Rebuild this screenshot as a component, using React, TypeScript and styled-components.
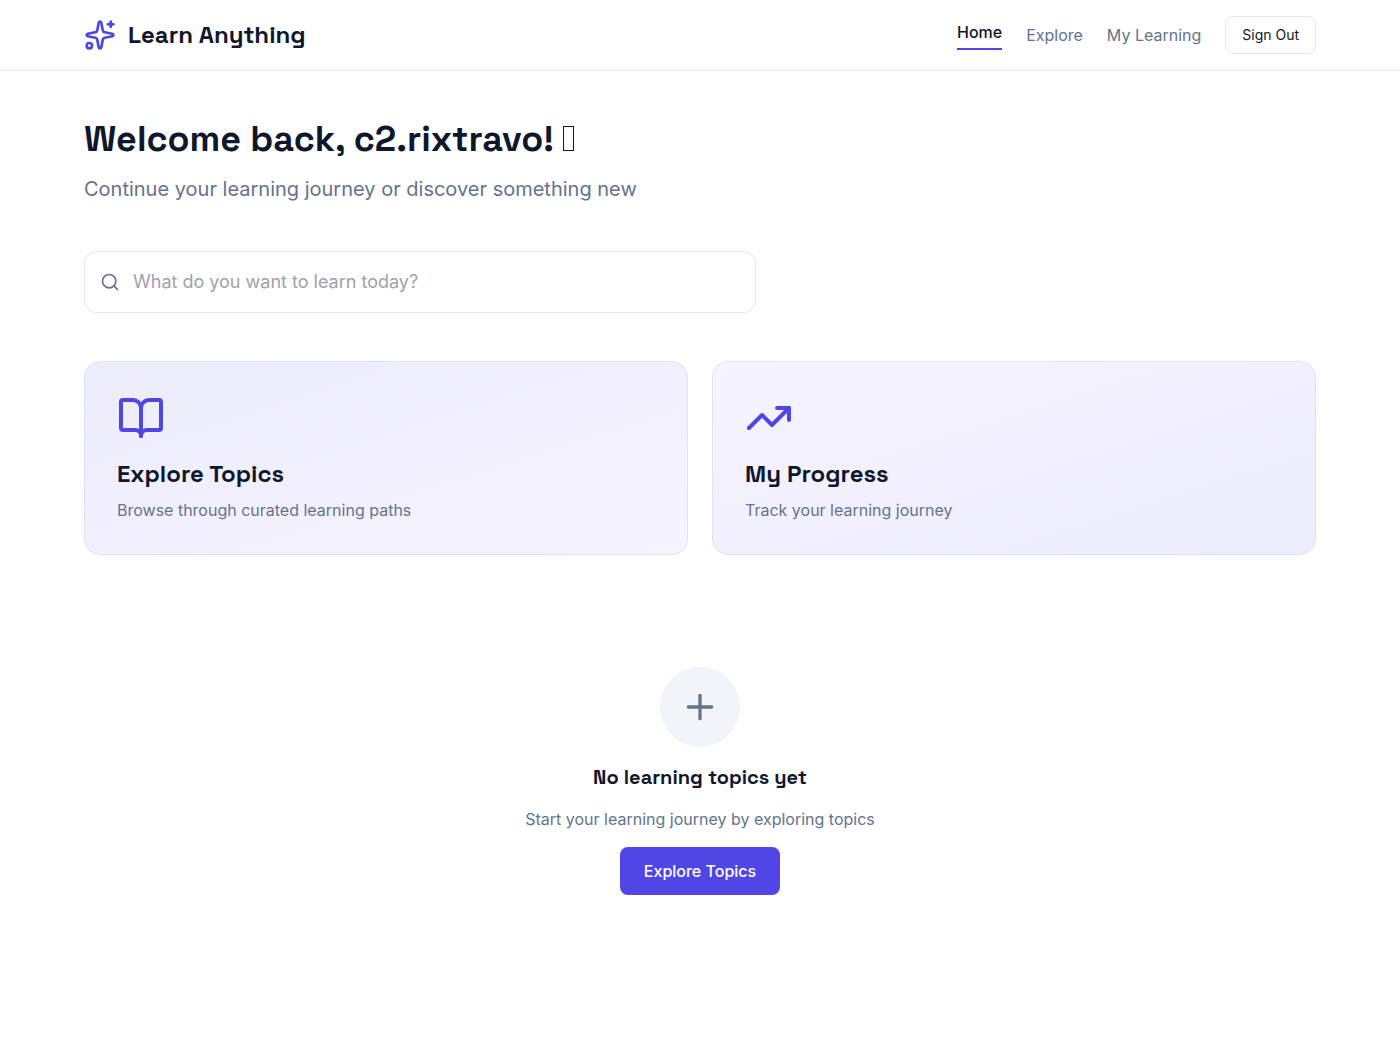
import React from "react";
import styled, { createGlobalStyle, css } from "styled-components";
import { Sparkles, Search, BookOpen, TrendingUp, Plus } from "lucide-react";

const display = css`
  font-family: "Space Grotesk", Inter, "Liberation Sans", sans-serif;
`;

const GlobalStyle = createGlobalStyle`
  *, *::before, *::after { box-sizing: border-box; }
  body {
    margin: 0;
    background: #fefefe;
    color: #0f172a;
    font-family: Inter, "Liberation Sans", sans-serif;
    font-size: 16px;
    line-height: 24px;
  }
  h1, h2, h3, p { margin: 0; }
  a { color: inherit; text-decoration: none; }
  button { font-family: inherit; cursor: pointer; }
`;

const Container = styled.div`
  width: 100%;
  max-width: 1400px;
  margin: 0 auto;
  padding: 0 84px;
`;

const Header = styled.header`
  background: #fefefe;
  border-bottom: 1px solid #e5e7eb;
`;

const HeaderRow = styled(Container)`
  display: flex;
  align-items: center;
  justify-content: space-between;
  padding-top: 16px;
  padding-bottom: 16px;
`;

const Brand = styled.a`
  ${display}
  display: flex;
  align-items: center;
  gap: 12px;
  font-size: 24px;
  line-height: 32px;
  font-weight: 700;
  svg { color: #4f46e5; }
`;

const Nav = styled.nav`
  display: flex;
  align-items: center;
  gap: 24px;
`;

const NavLink = styled.a<{ $active?: boolean }>`
  color: ${(p) => (p.$active ? "#0f172a" : "#64748b")};
  font-weight: ${(p) => (p.$active ? 500 : 400)};
  ${(p) => p.$active && css`
    padding-bottom: 4px;
    border-bottom: 2px solid #4f46e5;
  `}
`;

const OutlineButton = styled.button`
  height: 38px;
  padding: 0 16px;
  border: 1px solid #e5e7eb;
  border-radius: 8px;
  background: #fefefe;
  color: #0f172a;
  font-size: 14px;
  line-height: 20px;
`;

const Main = styled(Container).attrs({ as: "main" })`
  padding-top: 48px;
  padding-bottom: 48px;
`;

const Title = styled.h1`
  ${display}
  font-size: 36px;
  line-height: 40px;
  font-weight: 700;
`;

const GlyphBox = styled.span`
  display: inline-block;
  width: 11px;
  height: 25px;
  border: 1px solid currentColor;
`;

const Subtitle = styled.p`
  margin-top: 16px;
  color: #64748b;
  font-size: 20px;
  line-height: 28px;
`;

const SearchBox = styled.label`
  display: flex;
  align-items: center;
  gap: 13px;
  max-width: 672px;
  height: 62px;
  margin-top: 48px;
  padding: 0 15px;
  border: 1px solid #e5e7eb;
  border-radius: 12px;
  background: #fefefe;
  color: #64748b;
`;

const SearchInput = styled.input`
  flex: 1;
  min-width: 0;
  border: 0;
  outline: 0;
  padding: 0;
  background: transparent;
  color: #0f172a;
  font-family: inherit;
  font-size: 18px;
  line-height: 28px;
  &::placeholder { color: #a1a1aa; }
`;

const CardGrid = styled.section`
  display: grid;
  grid-template-columns: repeat(auto-fit, minmax(320px, 1fr));
  gap: 24px;
  margin-top: 48px;
`;

const Card = styled.a<{ $from: string; $to: string }>`
  padding: 32px;
  border: 1px solid #e2e2ee;
  border-radius: 16px;
  background: linear-gradient(to bottom right, ${(p) => p.$from}, ${(p) => p.$to});
  svg { display: block; color: #4f46e5; }
`;

const CardTitle = styled.h2`
  ${display}
  margin: 16px 0 8px;
  font-size: 24px;
  line-height: 32px;
  font-weight: 600;
`;

const Muted = styled.p`
  color: #64748b;
`;

const Empty = styled.section`
  display: flex;
  flex-direction: column;
  align-items: center;
  margin-top: 48px;
  padding: 64px 0;
  text-align: center;
`;

const EmptyIcon = styled.div`
  display: grid;
  place-items: center;
  width: 80px;
  height: 80px;
  border-radius: 50%;
  background: #f1f5f9;
  color: #64748b;
`;

const EmptyTitle = styled.h3`
  ${display}
  margin: 16px 0;
  font-size: 20px;
  line-height: 28px;
  font-weight: 600;
`;

const PrimaryButton = styled.button`
  height: 48px;
  margin-top: 16px;
  padding: 0 24px;
  border: 0;
  border-radius: 8px;
  background: #4f46e5;
  color: #fff;
  font-size: 16px;
  font-weight: 500;
  line-height: 24px;
`;

export default function App() {
  return (
    <>
      <GlobalStyle />
      <Header>
        <HeaderRow>
          <Brand href="#home"><Sparkles size={32} />Learn Anything</Brand>
          <Nav aria-label="Main">
            <NavLink href="#home" $active aria-current="page">Home</NavLink>
            <NavLink href="#explore">Explore</NavLink>
            <NavLink href="#learning">My Learning</NavLink>
            <OutlineButton type="button">Sign Out</OutlineButton>
          </Nav>
        </HeaderRow>
      </Header>
      <Main>
        <Title>Welcome back, c2.rixtravo! <GlyphBox aria-hidden /></Title>
        <Subtitle>Continue your learning journey or discover something new</Subtitle>
        <SearchBox>
          <Search size={20} aria-hidden />
          <SearchInput type="text" aria-label="Search topics" placeholder="What do you want to learn today?" />
        </SearchBox>
        <CardGrid>
          <Card href="#explore" $from="#edecfc" $to="#f6f4ff">
            <BookOpen size={48} />
            <CardTitle>Explore Topics</CardTitle>
            <Muted>Browse through curated learning paths</Muted>
          </Card>
          <Card href="#progress" $from="#f6f4ff" $to="#edecfc">
            <TrendingUp size={48} />
            <CardTitle>My Progress</CardTitle>
            <Muted>Track your learning journey</Muted>
          </Card>
        </CardGrid>
        <Empty>
          <EmptyIcon><Plus size={40} /></EmptyIcon>
          <EmptyTitle>No learning topics yet</EmptyTitle>
          <Muted>Start your learning journey by exploring topics</Muted>
          <PrimaryButton type="button">Explore Topics</PrimaryButton>
        </Empty>
      </Main>
    </>
  );
}
